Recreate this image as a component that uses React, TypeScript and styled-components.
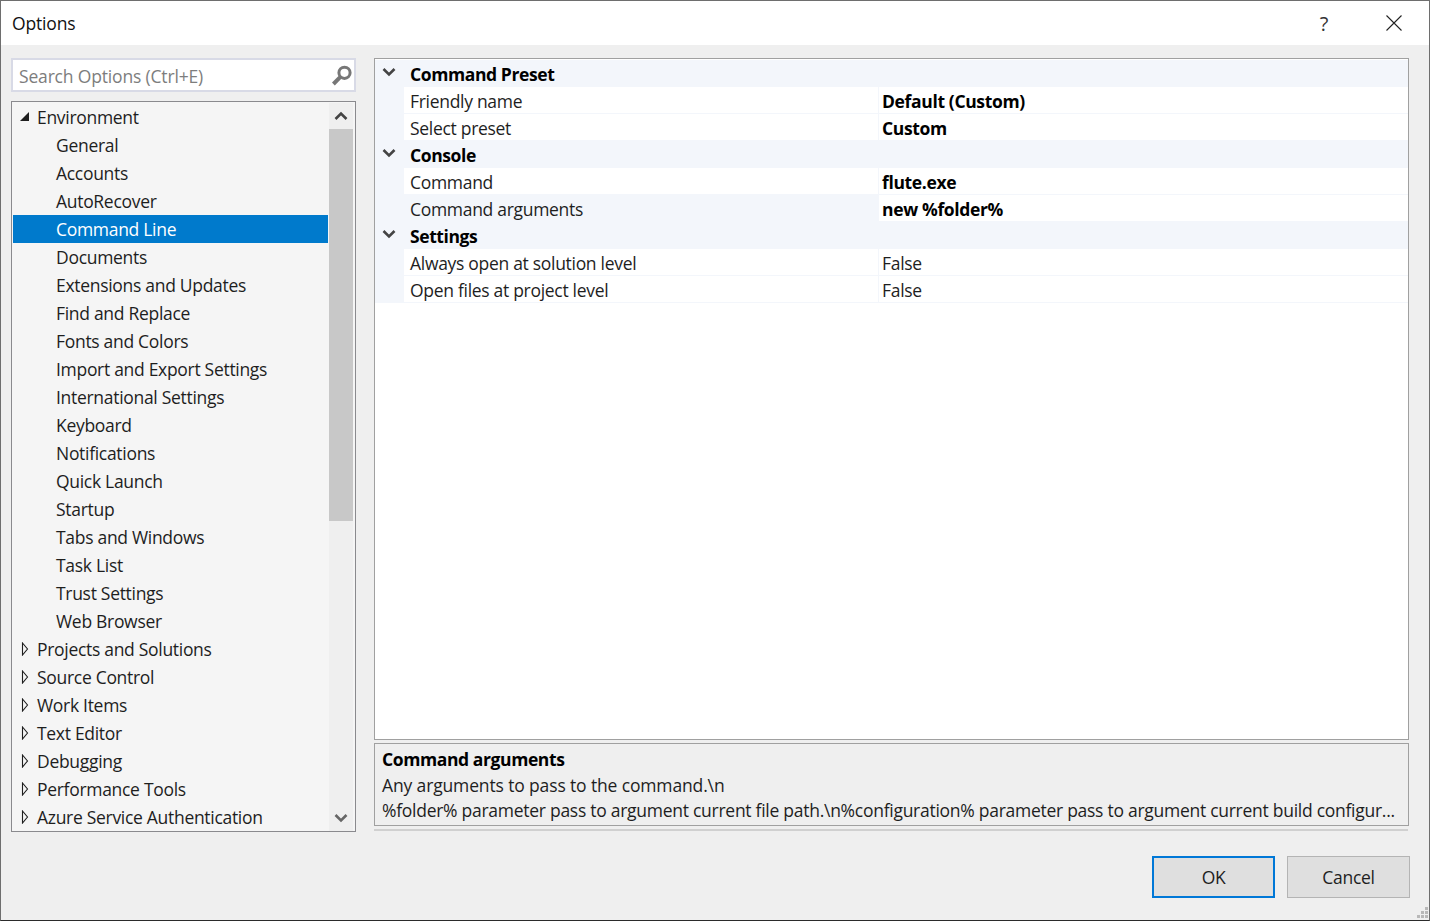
import styled, { createGlobalStyle } from 'styled-components'

const TEXT = '#1e1e1e'

const GlobalStyle = createGlobalStyle`
    html, body {
        margin: 0;
        padding: 0;
        background: #efefef;
    }
    body {
        font-family: 'Open Sans', 'Noto Sans', sans-serif;
        font-size: 17.5px;
        letter-spacing: -0.3px;
        color: ${TEXT};
    }
    * {
        box-sizing: border-box;
    }
`

const Window = styled.div`
    width: 1430px;
    height: 921px;
    display: flex;
    flex-direction: column;
    background: #efefef;
    border: 1px solid #6e6e6e;
    border-bottom-color: #2b2b2b;
    overflow: hidden;
`

const TitleBar = styled.div`
    height: 44px;
    flex: none;
    background: #fff;
    display: flex;
    align-items: center;
    padding-left: 11px;
    color: #111;
`

const Title = styled.div`
    flex: 1;
    letter-spacing: -0.15px;
`

const HelpButton = styled.div`
    width: 70px;
    text-align: center;
    font-size: 20px;
    color: #333;
`

const CloseButton = styled.div`
    width: 70px;
    height: 44px;
    display: flex;
    align-items: center;
    justify-content: center;
`

const Body = styled.div`
    height: 787px;
    flex: none;
    display: flex;
    gap: 18px;
    padding: 13px 20px 0 10px;
`

const LeftColumn = styled.div`
    width: 345px;
    display: flex;
    flex-direction: column;
    gap: 9px;
`

const SearchBox = styled.div`
    height: 34px;
    flex: none;
    display: flex;
    align-items: center;
    justify-content: space-between;
    background: #fff;
    border: 2px solid #d8dae6;
    padding: 1px 1px 0 6px;
    color: #7d7d7d;
    letter-spacing: -0.17px;
`

const TreeBox = styled.div`
    height: 731px;
    display: flex;
    border: 1px solid #8a8a8e;
    background: #f5f5f5;
    padding: 1px 2px 0 1px;
`

const TreeList = styled.div`
    width: 315px;
    flex: none;
    margin-right: 1px;
`

const TreeRow = styled.div<{ $child?: boolean; $selected?: boolean }>`
    height: 28px;
    display: flex;
    align-items: center;
    white-space: nowrap;
    padding-left: ${(p) => (p.$child ? '43px' : '6px')};
    background: ${(p) => (p.$selected ? '#007acc' : 'transparent')};
    color: ${(p) => (p.$selected ? '#fff' : TEXT)};
`

const Twisty = styled.span`
    width: 18px;
    flex: none;
    display: flex;
`

const ScrollBar = styled.div`
    width: 24px;
    flex: none;
    display: flex;
    flex-direction: column;
    background: #efefef;
`

const ScrollButton = styled.div`
    height: 26px;
    flex: none;
    display: flex;
    align-items: center;
    justify-content: center;
`

const ScrollThumb = styled.div`
    height: 392px;
    flex: none;
    background: #c8c8c8;
`

const ScrollTrack = styled.div`
    flex: 1;
`

const RightColumn = styled.div`
    width: 1035px;
    display: flex;
    flex-direction: column;
`

const PropertyGrid = styled.div`
    height: 682px;
    flex: none;
    background: #fff;
    border: 1px solid #a0a0a0;
    padding-top: 1px;
`

const CategoryRow = styled.div`
    height: 27px;
    display: flex;
    align-items: center;
    background: #f3f6fb;
    font-weight: 700;
    letter-spacing: -0.4px;
    color: #000;
`

const Gutter = styled.div`
    width: 29px;
    flex: none;
    display: flex;
    justify-content: center;
    position: relative;
    top: -2px;
    padding-right: 1px;
`

const CategoryName = styled.div`
    padding-left: 6px;
`

const PropRow = styled.div`
    height: 27px;
    display: flex;
    padding-left: 29px;
    background: #f3f6fb;
`

const NameCell = styled.div<{ $selected?: boolean }>`
    width: 474px;
    flex: none;
    display: flex;
    align-items: center;
    padding: 2px 0 0 6px;
    background: ${(p) => (p.$selected ? '#f3f6fb' : '#fff')};
    border-bottom: 1px solid #f3f6fb;
`

const ValueCell = styled.div<{ $bold?: boolean }>`
    flex: 1;
    display: flex;
    align-items: center;
    padding: 2px 0 0 3px;
    margin-left: 1px;
    background: #fff;
    border-bottom: 1px solid #f3f6fb;
    font-weight: ${(p) => (p.$bold ? 700 : 400)};
    letter-spacing: ${(p) => (p.$bold ? '-0.35px' : '-0.3px')};
    color: ${(p) => (p.$bold ? '#000' : TEXT)};
`

const Description = styled.div`
    height: 83px;
    flex: none;
    margin-top: 3px;
    border: 1px solid #a0a0a0;
    padding: 3px 7px 0;
    line-height: 25.5px;
    white-space: nowrap;
`

const DescriptionTitle = styled.div`
    font-weight: 700;
    letter-spacing: -0.4px;
    color: #000;
`

const DescriptionLine = styled.div<{ $tight?: boolean }>`
    letter-spacing: ${(p) => (p.$tight ? '-0.27px' : '-0.14px')};
`

const Separator = styled.div`
    height: 2px;
    flex: none;
    margin-top: 3px;
    margin-right: 1px;
    background: #d0d0d0;
`

const Footer = styled.div`
    flex: 1;
    display: flex;
    justify-content: flex-end;
    gap: 12px;
    padding: 24px 19px 0 0;
`

const Button = styled.div<{ $primary?: boolean }>`
    width: 123px;
    height: 42px;
    display: flex;
    align-items: center;
    justify-content: center;
    background: #dfdfdf;
    border: ${(p) => (p.$primary ? '2px solid #0078d7' : '1px solid #b4b4b4')};
`

const Grip = styled.svg`
    position: absolute;
    left: 1416px;
    top: 907px;
`

const environmentItems = [
    'General',
    'Accounts',
    'AutoRecover',
    'Command Line',
    'Documents',
    'Extensions and Updates',
    'Find and Replace',
    'Fonts and Colors',
    'Import and Export Settings',
    'International Settings',
    'Keyboard',
    'Notifications',
    'Quick Launch',
    'Startup',
    'Tabs and Windows',
    'Task List',
    'Trust Settings',
    'Web Browser',
]

const collapsedItems = [
    'Projects and Solutions',
    'Source Control',
    'Work Items',
    'Text Editor',
    'Debugging',
    'Performance Tools',
    'Azure Service Authentication',
]

const categories = [
    {
        name: 'Command Preset',
        rows: [
            { name: 'Friendly name', value: 'Default (Custom)', bold: true },
            { name: 'Select preset', value: 'Custom', bold: true },
        ],
    },
    {
        name: 'Console',
        rows: [
            { name: 'Command', value: 'flute.exe', bold: true },
            { name: 'Command arguments', value: 'new %folder%', bold: true, selected: true },
        ],
    },
    {
        name: 'Settings',
        rows: [
            { name: 'Always open at solution level', value: 'False' },
            { name: 'Open files at project level', value: 'False' },
        ],
    },
]

const Chevron = ({ down, color = '#444' }: { down?: boolean; color?: string }) => (
    <svg width="14" height="10" viewBox="0 0 14 10">
        <path
            d={down ? 'M1.5 2 L7 7.5 L12.5 2' : 'M1.5 8 L7 2.5 L12.5 8'}
            fill="none"
            stroke={color}
            strokeWidth="2.6"
        />
    </svg>
)

const SearchIcon = () => (
    <svg width="22" height="22" viewBox="0 0 22 22">
        <circle cx="13.5" cy="7.8" r="5.6" fill="none" stroke="#777" strokeWidth="3" />
        <path d="M9.2 12.2 L2.4 19" stroke="#777" strokeWidth="4" />
    </svg>
)

const OpenTwisty = () => (
    <Twisty>
        <svg width="12" height="12" viewBox="0 0 12 12">
            <path d="M1 10 H10 V1 Z" fill="#1e1e1e" />
        </svg>
    </Twisty>
)

const ClosedTwisty = () => (
    <Twisty>
        <svg width="10" height="14" viewBox="0 0 10 14">
            <path d="M3.5 1 L8.5 7 L3.5 13 Z" fill="none" stroke="#1e1e1e" strokeWidth="1.1" />
        </svg>
    </Twisty>
)

const App = () => {
    return (
        <Window>
            <GlobalStyle />
            <TitleBar>
                <Title>Options</Title>
                <HelpButton>?</HelpButton>
                <CloseButton>
                    <svg width="16" height="16" viewBox="0 0 16 16">
                        <path d="M0.5 0.5 L15.5 15.5 M15.5 0.5 L0.5 15.5" stroke="#222" strokeWidth="1.1" />
                    </svg>
                </CloseButton>
            </TitleBar>
            <Body>
                <LeftColumn>
                    <SearchBox>
                        <span>Search Options (Ctrl+E)</span>
                        <SearchIcon />
                    </SearchBox>
                    <TreeBox>
                        <TreeList>
                            <TreeRow>
                                <OpenTwisty />
                                Environment
                            </TreeRow>
                            {environmentItems.map((item) => (
                                <TreeRow key={item} $child $selected={item === 'Command Line'}>
                                    {item}
                                </TreeRow>
                            ))}
                            {collapsedItems.map((item) => (
                                <TreeRow key={item}>
                                    <ClosedTwisty />
                                    {item}
                                </TreeRow>
                            ))}
                        </TreeList>
                        <ScrollBar>
                            <ScrollButton>
                                <Chevron />
                            </ScrollButton>
                            <ScrollThumb />
                            <ScrollTrack />
                            <ScrollButton>
                                <Chevron down color="#666" />
                            </ScrollButton>
                        </ScrollBar>
                    </TreeBox>
                </LeftColumn>
                <RightColumn>
                    <PropertyGrid>
                        {categories.map((category) => (
                            <div key={category.name}>
                                <CategoryRow>
                                    <Gutter>
                                        <Chevron down />
                                    </Gutter>
                                    <CategoryName>{category.name}</CategoryName>
                                </CategoryRow>
                                {category.rows.map((row) => (
                                    <PropRow key={row.name}>
                                        <NameCell $selected={row.selected}>{row.name}</NameCell>
                                        <ValueCell $bold={row.bold}>{row.value}</ValueCell>
                                    </PropRow>
                                ))}
                            </div>
                        ))}
                    </PropertyGrid>
                    <Description>
                        <DescriptionTitle>Command arguments</DescriptionTitle>
                        <DescriptionLine>Any arguments to pass to the command.\n</DescriptionLine>
                        <DescriptionLine $tight>
                            %folder% parameter pass to argument current file path.\n%configuration% parameter pass to
                            argument current build configur...
                        </DescriptionLine>
                    </Description>
                    <Separator />
                </RightColumn>
            </Body>
            <Footer>
                <Button $primary>OK</Button>
                <Button>Cancel</Button>
            </Footer>
            <Grip width="12" height="12" viewBox="0 0 12 12">
                <path
                    d="M9 0h3v3H9z M5 4h3v3H5z M9 4h3v3H9z M1 8h3v3H1z M5 8h3v3H5z M9 8h3v3H9z"
                    fill="#b8b8b8"
                />
            </Grip>
        </Window>
    )
}

export default App
